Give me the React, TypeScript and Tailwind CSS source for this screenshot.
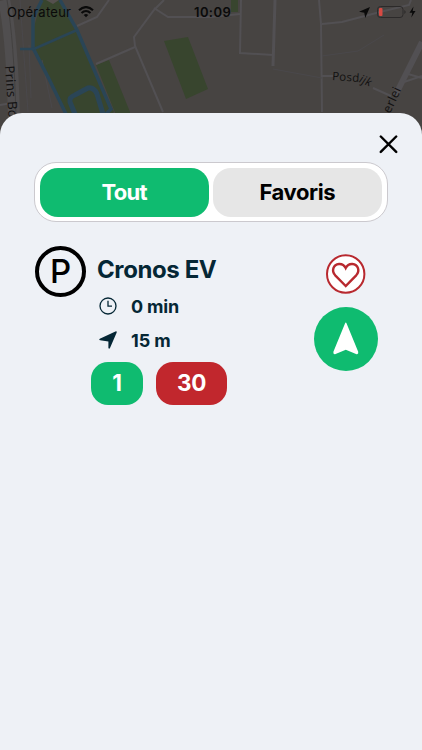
import React from 'react';

const MapBackground = () => (
  <svg className="absolute inset-0 w-full h-[150px]" viewBox="0 0 422 150" fill="none">
    <rect width="422" height="150" fill="#474442" />

    {/* Parks */}
    <path d="M42 0H60L77 30L114 112L105 120H68L34 49L33 30Z" fill="#38452e" />
    <path d="M96 65L109 60L130 112V120H118Z" fill="#38452e" />
    <path d="M164 41L188 37L208 89L186 99Z" fill="#38452e" />
    <path d="M231 0H238V12H231Z" fill="#38452e" />
    <path d="M46 0H59L53 4Z" fill="#55504e" />

    {/* Roads */}
    <g stroke="#525053" strokeWidth="2">
      <path d="M77 26L97 17L109 0" />
      <path d="M164 0L154 10L134 37L135 46L163 112" />
      <path d="M154 8L168 17H211L240 14" />
      <path d="M135 47L96 64" />
      <path d="M241 0L240 53L273 55" />
      <path d="M275 0L273 66" strokeWidth="3" />
      <path d="M319 0L321 24L322 112" />
      <path d="M322 24L342 22L380 12L409 5L411 0" />
      <path d="M322 76H333M373 88L391 96" />
      <path d="M422 42L395 96" strokeWidth="6" />
      <path d="M408 74L422 78M404 82L422 76" />
      <path d="M273 69L322 78M322 56L358 51L384 35" stroke="#4a484b" strokeWidth="1" />
      <path d="M0 105L12 103" />
      <path d="M20 0L28 112M29 45L31 98M42 60L52 108" stroke="#4a484b" strokeWidth="1" />
    </g>
    <path d="M4 0Q12 35 14 118" stroke="#504e4f" strokeWidth="12" />
    <path d="M7 0Q14 40 16 118" stroke="#434140" strokeWidth="1" />

    {/* Canals */}
    <g stroke="#2a4556" strokeWidth="3.5">
      <path d="M42 0L33 18V48L49 79L66 114" />
      <path d="M60 0L77 30L111 109L106 114" />
      <path d="M20 49H34L77 30" strokeWidth="2.6" />
      <path d="M75 114L70 102Q69 97 75 95L88 88Q94 87 97 94L103 114" strokeWidth="5" />
    </g>

    <g fill="#121111" fontFamily="Open Sans, sans-serif">
      <text x="5" y="66" fontSize="13" textLength="52" transform="rotate(86 5 66)">
        Prins Bo
      </text>
      <text x="332" y="80" fontSize="11.5" textLength="27" transform="rotate(4 332 80)">
        Posd
      </text>
      <text x="358.5" y="82" fontSize="11.5" fontStyle="italic" textLength="12" transform="rotate(22 358.5 82)">
        ijk
      </text>
      <text x="390" y="114" fontSize="12.5" textLength="27" transform="rotate(-65 390 114)">
        erlei
      </text>
    </g>
  </svg>
);

const StatusBar = () => (
  <div className="relative flex h-6 items-center text-[#0a0a0a]">
    <div className="flex w-[194px] items-center gap-1.5 pl-[7px]">
      <span className="w-[65px] whitespace-nowrap text-[13px] leading-[22px] tracking-[0.25px]">Opérateur</span>
      <svg className="h-3 w-4" viewBox="0 0 16 12" fill="none" stroke="currentColor">
        <path d="M1 4.2Q8-2 15 4.2" strokeWidth="2.2" />
        <path d="M3.5 7Q8 3 12.5 7" strokeWidth="2.1" />
        <path d="M5.7 8.9Q8 7 10.3 8.9L8 11.3Z" fill="currentColor" stroke="none" />
      </svg>
    </div>
    <span className="w-[165px] text-[13px] font-semibold leading-6 tracking-[0.4px]">10:09</span>
    <svg className="h-[11px] w-[11px]" viewBox="0 0 11 11" fill="currentColor">
      <path d="M11 0L6.2 11L5.3 5.7L0 4.8Z" />
    </svg>
    <svg className="ml-1.5 h-[14px] w-[42px]" viewBox="0 0 42 14">
      <rect x="1.5" y="1.5" width="25.5" height="11" rx="3" fill="none" stroke="#2c2a2a" />
      <rect x="3" y="3" width="3.5" height="8" rx="1" fill="#d84a43" />
      <path d="M28.5 5Q30.5 7 28.5 9Z" fill="#222020" />
      <path d="M37.5 1.5L33.5 7.7H36.3L35.3 12.5L39.5 6H36.7Z" fill="#0a0a0a" />
    </svg>
  </div>
);

const Tabs = () => (
  <div className="mx-[34px] flex h-[60px] gap-1 rounded-[22px] border border-[#cbc9ce] bg-white py-[4.5px] pl-[4.5px] pr-[5px]">
    <button className="flex-1 rounded-[18px] bg-[#0fbb70] text-[22px] font-bold tracking-[-0.7px] text-white">
      Tout
    </button>
    <button className="flex-1 rounded-[18px] bg-[#e6e6e6] text-[22px] font-bold tracking-[-0.4px] text-black">
      Favoris
    </button>
  </div>
);

const StationCard = () => (
  <div className="mt-6 flex pl-[35px] pr-11">
    <div className="flex h-[51px] w-[51px] items-center justify-center rounded-full border-4 border-black text-[33px] font-medium leading-none text-black">
      P
    </div>

    <div className="ml-[5px] w-[200px]">
      <h2 className="ml-1.5 mt-[7px] h-[33px] text-[24px] font-bold leading-[33px] tracking-[-0.4px]">Cronos EV</h2>
      <div className="ml-2 mt-[3px] flex h-[34px] items-center gap-3.5 text-[18px] font-bold tracking-[-0.2px]">
        <svg className="h-[18px] w-[18px]" viewBox="0 0 18 18" fill="none" stroke="currentColor" strokeWidth="1.3">
          <circle cx="9" cy="9" r="8" />
          <path d="M9 3.8V9.2H13" />
        </svg>
        <span>0 min</span>
      </div>
      <div className="ml-2 flex h-[34px] items-center gap-3.5 text-[18px] font-bold tracking-[-0.1px]">
        <svg className="h-[18px] w-[18px]" viewBox="0 0 18 18" fill="currentColor">
          <path d="M16.4 0.5Q18.2-.1 17.6 1.7L11 16.9Q10.1 18.4 9.4 16.9V10.5L1.2 9.3Q-.5 8.7 .8 7.8Z" />
        </svg>
        <span>15 m</span>
      </div>
      <div className="mt-[4.5px] flex gap-[13px] text-[22.5px] font-bold tracking-[-0.3px] text-white">
        <span className="flex h-[43px] w-[52px] items-center justify-center rounded-[17px] bg-[#0fbb70]">1</span>
        <span className="flex h-[43px] w-[71px] items-center justify-center rounded-[17px] bg-[#c1272d]">30</span>
      </div>
    </div>

    <div className="ml-auto flex w-16 flex-col items-center pt-[7.5px]">
      <button aria-label="Favori">
        <svg className="h-10 w-10" viewBox="0 0 40 40" fill="none" stroke="#b8292f">
          <circle cx="19.7" cy="20" r="18.7" fill="white" strokeWidth="2" />
          <path
            d="M19.7 32L9.2 21.3C5.2 17 7.2 10.3 13 10C16.5 9.8 18.7 12 19.7 14C20.7 12 22.9 9.8 26.4 10C32.2 10.3 34.2 17 30.2 21.3Z"
            strokeWidth="2.4"
          />
        </svg>
      </button>
      <button aria-label="Itinéraire" className="mt-[13px] h-16 w-16 rounded-full bg-[#0fbb70]">
        <svg viewBox="0 0 64 64" fill="white">
          <path d="M31 16.5Q31.8 14.5 32.6 16.5L44.2 44.8Q44.8 47.8 42 47L31.8 42.8L21.6 47Q18.8 47.8 19.4 44.8Z" />
        </svg>
      </button>
    </div>
  </div>
);

export default function App() {
  return (
    <div className="relative flex h-[750px] w-[422px] flex-col overflow-hidden bg-[#474442] font-[Inter,sans-serif]">
      <MapBackground />
      <StatusBar />
      <div className="relative mt-[88.5px] flex-1 rounded-t-[22px] bg-[#eef1f6] text-[#052735]">
        <div className="flex h-[49.5px] justify-end pr-6 pt-[22px]">
          <button aria-label="Fermer" className="h-[19px] w-[19px]">
            <svg viewBox="0 0 19 19" fill="none" stroke="black" strokeWidth="2.4" strokeLinecap="round">
              <path d="M1.8 1.5L17.2 16.9M17.2 1.5L1.8 16.9" />
            </svg>
          </button>
        </div>
        <Tabs />
        <StationCard />
      </div>
    </div>
  );
}
